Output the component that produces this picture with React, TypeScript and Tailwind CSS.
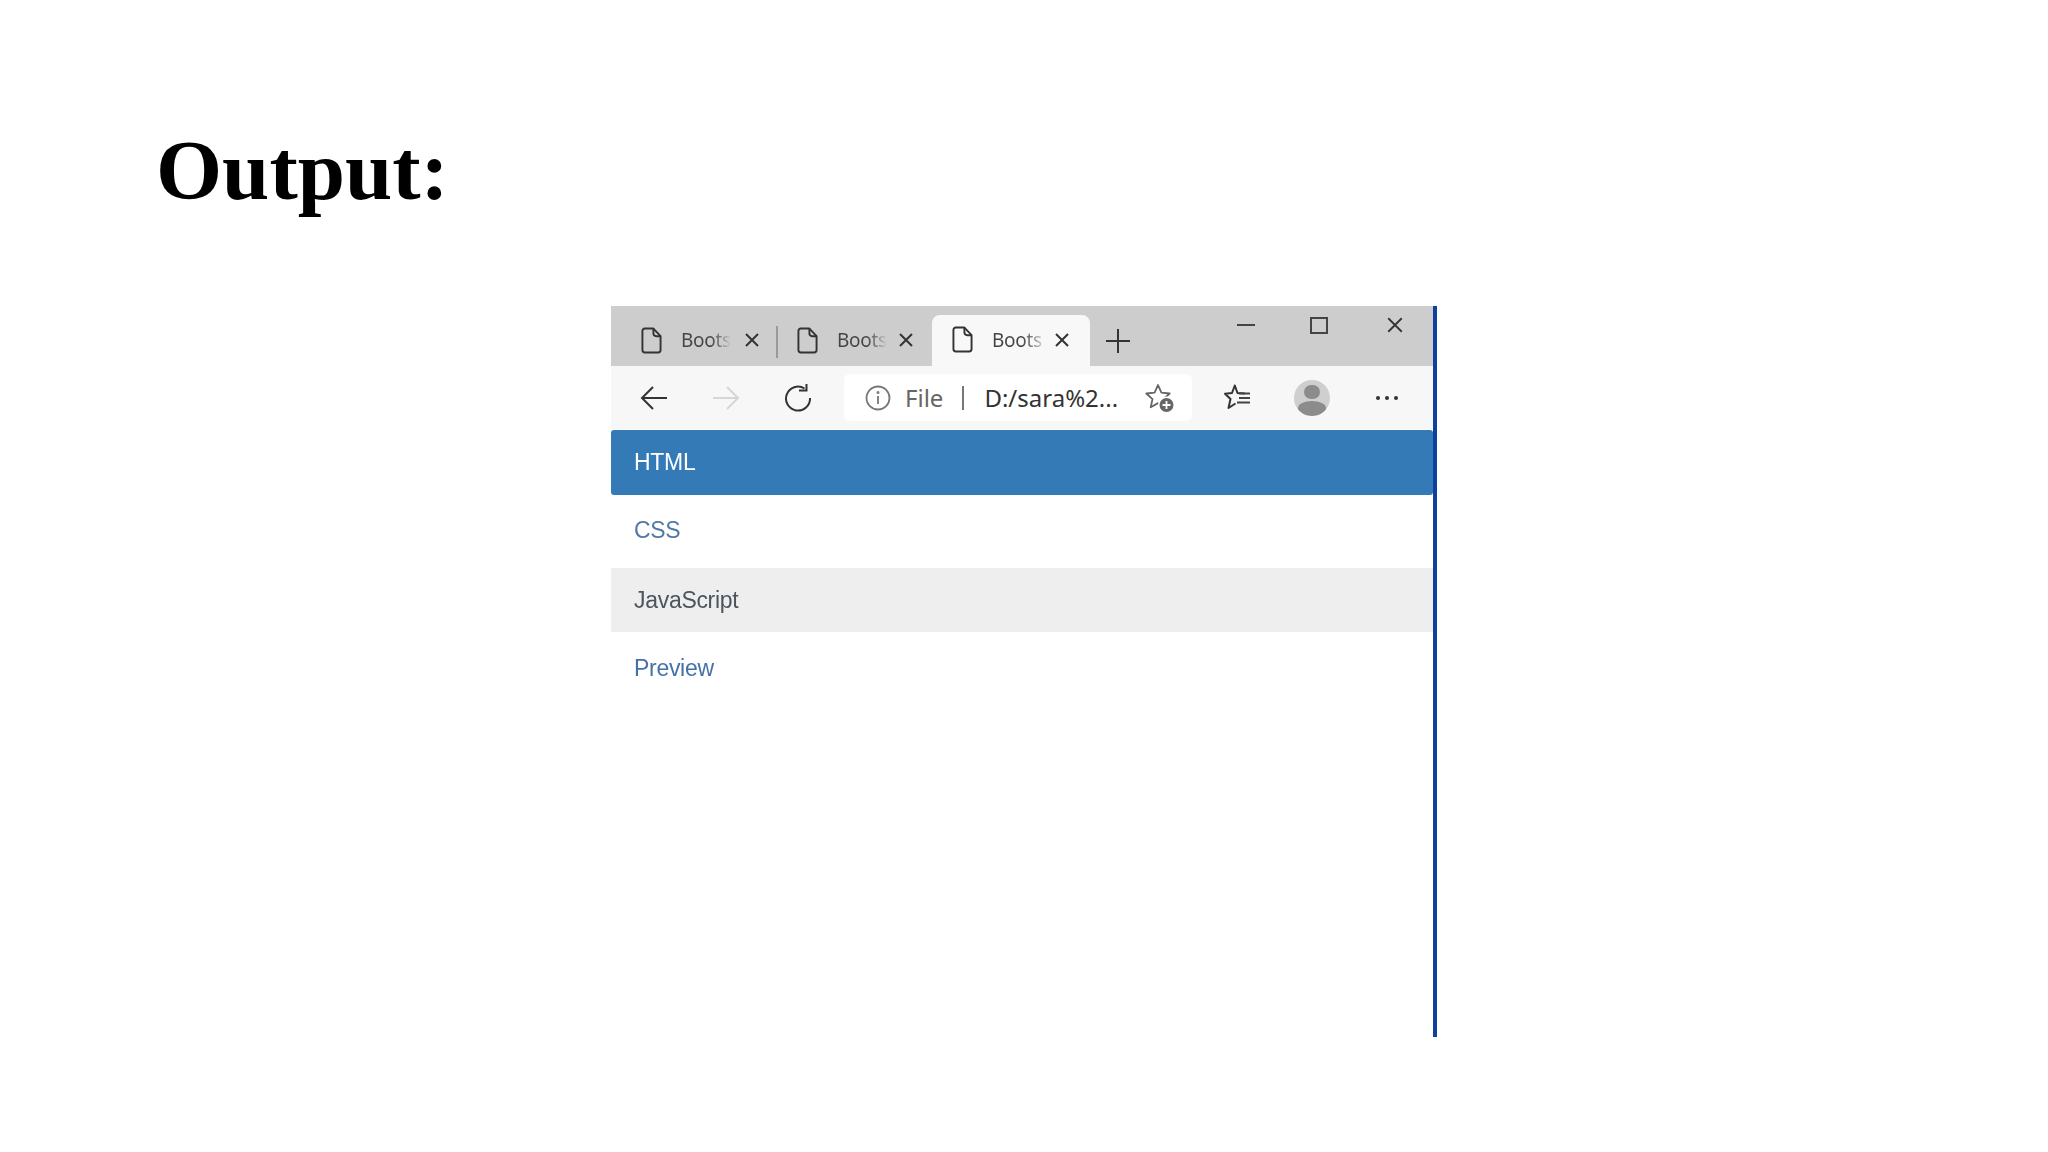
const FileIcon = () => (
  <svg width="21" height="27" viewBox="0 0 22 28" fill="none" stroke="#333" strokeWidth="2" strokeLinejoin="round" className="shrink-0">
    <path d="M4 1.500h9l7.500 8v14.500a2.500 2.500 0 0 1-2.500 2.500h-14a2.500 2.500 0 0 1-2.500-2.500v-20a2.500 2.500 0 0 1 2.500-2.500z" />
    <path d="M13 1.500v5a3 3 0 0 0 3 3h4.500" />
  </svg>
);

const CloseIcon = ({ size = 16, width = 2 }: { size?: number; width?: number }) => (
  <svg width={size} height={size} viewBox="0 0 16 16" stroke="#333" strokeWidth={width} className="shrink-0">
    <path d="M2 2l12 12M14 2L2 14" />
  </svg>
);

const Tab = ({ className, closeClass }: { className: string; closeClass: string }) => (
  <div className={`flex items-center h-full ${className}`}>
    <FileIcon />
    <span className="ml-[19px] w-[50px] whitespace-nowrap text-[19px] leading-[24px] tracking-[-0.3px] bg-linear-to-r from-[#444444] from-60% to-[#cccccc] bg-clip-text text-transparent font-['Noto_Sans',sans-serif]">
      Boots
    </span>
    <div className={closeClass}>
      <CloseIcon />
    </div>
  </div>
);

const Arrow = ({ color, flip }: { color: string; flip?: boolean }) => (
  <svg width="28" height="24" viewBox="0 0 28 24" fill="none" stroke={color} strokeWidth="2" className={flip ? "rotate-180" : ""}>
    <path d="M27 12H2M13 1L2 12l11 11" />
  </svg>
);

const Reload = () => (
  <svg width="28" height="28" viewBox="0 0 28 28" fill="none" stroke="#333" strokeWidth="2">
    <path d="M20.500 4.500A12 12 0 1 0 26 14" />
    <path d="M15 5.500h7.500V-1" transform="translate(0 1)" />
  </svg>
);

const InfoIcon = () => (
  <svg width="26" height="26" viewBox="0 0 26 26" fill="none" stroke="#777" strokeWidth="1.800">
    <circle cx="13" cy="13" r="11.500" />
    <path d="M13 11v8" />
    <circle cx="13" cy="7.500" r="0.600" />
  </svg>
);

const StarAdd = () => (
  <svg width="30" height="30" viewBox="0 0 30 30" fill="none">
    <path d="M13 2l3.400 7.600 8.300.9-6.200 5.600 1.800 8.200-7.300-4.200-7.300 4.200 1.800-8.200-6.200-5.600 8.300-.9z" stroke="#666" strokeWidth="1.800" strokeLinejoin="round" />
    <circle cx="21.500" cy="22" r="8.500" fill="#fff" />
    <circle cx="21.500" cy="22" r="7" fill="#666" />
    <path d="M21.500 18v8M17.500 22h8" stroke="#fff" strokeWidth="1.800" />
  </svg>
);

const FavList = () => (
  <svg width="30" height="30" viewBox="0 0 30 30" fill="none" stroke="#333" strokeWidth="2" strokeLinejoin="round">
    <path d="M21 10.500L13.500 10 10.800 2.500 8 10l-7 .7 5.500 5.300-2 9 7-4.500" transform="translate(2 0)" />
    <path d="M17 10.500h11M17 15h11M15 19.500h13" stroke="#444" />
  </svg>
);

const Avatar = () => (
  <div className="w-[36px] h-[36px] rounded-full bg-[#cfcfcf] overflow-hidden flex flex-col items-center shrink-0">
    <div className="w-[16px] h-[16px] rounded-full bg-[#8c8c8c] mt-[5px]" />
    <div className="w-[28px] h-[16px] rounded-[50%] bg-[#8c8c8c] mt-[2px]" />
  </div>
);

const Dots = () => (
  <div className="flex gap-[5px] ml-[46px]">
    <div className="w-[4px] h-[4px] rounded-full bg-[#333]" />
    <div className="w-[4px] h-[4px] rounded-full bg-[#333]" />
    <div className="w-[4px] h-[4px] rounded-full bg-[#333]" />
  </div>
);

export default function App() {
  return (
    <div className="w-[2048px] h-[1152px] bg-white overflow-hidden">
      <h1 className="pl-[156px] pt-[122px] h-[306px] text-[85px] leading-[96px] font-bold text-black font-['Liberation_Serif',serif]">
        Output:
      </h1>
      <div className="ml-[611px] w-[826px] h-[731px] border-r-[4px] border-[#0f3f9f] blur-[0.5px]">
        <div className="flex h-[60px] bg-[#cdcdcd]">
          <Tab className="pl-[30px] pt-[8px]" closeClass="ml-[13px]" />
          <div className="w-[2px] h-[32px] bg-[#9a9a9a] mt-[20px] ml-[16px]" />
          <Tab className="pl-[19px] pt-[8px]" closeClass="ml-[11px]" />
          <div className="ml-[18px] mt-[9px] h-[51px] w-[158px] rounded-t-[8px] bg-[#f8f8f8]">
            <Tab className="pl-[20px] pb-[2px]" closeClass="ml-[12px]" />
          </div>
          <svg width="24" height="24" viewBox="0 0 24 24" stroke="#333" strokeWidth="2" className="ml-[16px] mt-[23px]">
            <path d="M12 0v24M0 12h24" />
          </svg>
          <div className="w-[18px] h-[2px] bg-[#444] ml-[107px] mt-[18px]" />
          <div className="w-[18px] h-[17px] border-2 border-[#444] ml-[55px] mt-[11px]" />
          <div className="ml-[58px] mt-[10px]">
            <CloseIcon size={18} width={1.6} />
          </div>
        </div>
        <div className="flex items-center h-[63px] bg-[#f7f7f7] pl-[29px]">
          <Arrow color="#333" />
          <div className="ml-[44px]">
            <Arrow color="#d6d6d6" flip />
          </div>
          <div className="ml-[44px]">
            <Reload />
          </div>
          <div className="flex items-center ml-[32px] w-[348px] h-[47px] bg-white rounded-[6px] pl-[21px]">
            <InfoIcon />
            <span className="ml-[14px] text-[24px] leading-none text-[#666] font-['Noto_Sans',sans-serif]">File</span>
            <div className="w-[2px] h-[24px] bg-[#777] ml-[19px]" />
            <span className="ml-[20px] text-[24px] leading-none text-[#333] whitespace-nowrap font-['Noto_Sans',sans-serif]">D:/sara%2...</span>
            <div className="ml-[27px]">
              <StarAdd />
            </div>
          </div>
          <div className="ml-[30px]">
            <FavList />
          </div>
          <div className="ml-[42px]">
            <Avatar />
          </div>
          <Dots />
        </div>
        <div className="pt-[1px] text-[23px] tracking-[-0.3px] font-['Liberation_Sans',sans-serif]">
          <div className="flex items-center h-[65px] pl-[23px] rounded-[3px] bg-[#337ab7] text-white">HTML</div>
          <div className="flex items-center h-[65px] mt-[3px] pl-[23px] text-[#4f7aa3]">CSS</div>
          <div className="flex items-center h-[64px] mt-[5px] pl-[23px] bg-[#eeeeee] text-[#4a5560]">JavaScript</div>
          <div className="flex items-center h-[65px] mt-[4px] pl-[23px] text-[#4570a8]">Preview</div>
        </div>
      </div>
    </div>
  );
}
